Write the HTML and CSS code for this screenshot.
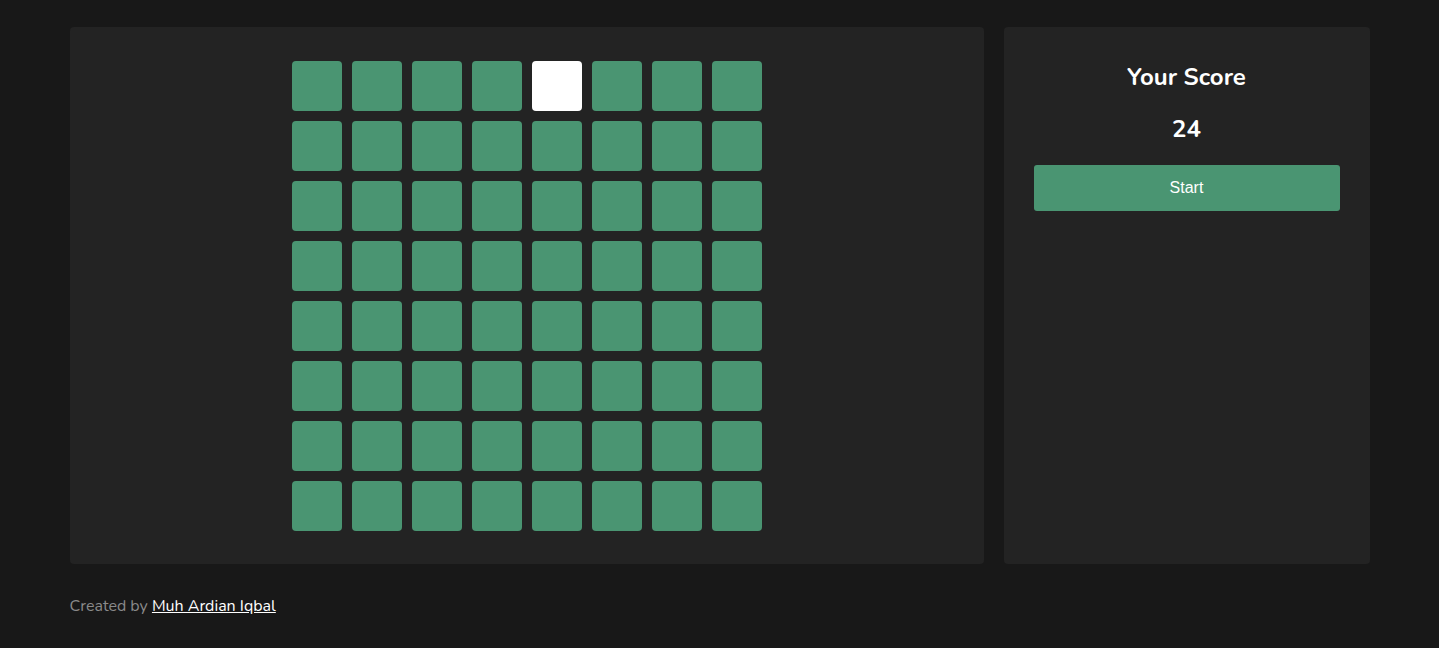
FILE: index.html
```html
<!DOCTYPE html>
<html>
<head>
<meta charset="utf-8">
<link rel="stylesheet" href="styles.css">
</head>
<body>
<div class="container">
  <main class="layout">
    <section class="board-panel">
      <div class="board" id="board"></div>
    </section>
    <aside class="score-panel">
      <h2 class="score-title">Your Score</h2>
      <div class="score-value">24</div>
      <button class="start-btn">Start</button>
    </aside>
  </main>
  <footer class="footer">Created by <a href="#">Muh Ardian Iqbal</a></footer>
</div>
<script>
  var b = document.getElementById('board');
  for (var i = 0; i < 64; i++) {
    var c = document.createElement('div');
    c.className = 'cell' + (i === 4 ? ' active' : '');
    b.appendChild(c);
  }
</script>
</body>
</html>
```
FILE: styles.css
```css
* { box-sizing: border-box; }
html, body { margin: 0; padding: 0; }
body {
  background: #181818;
  color: #fff;
  font-family: "Nunito", "Lato", "Noto Sans", sans-serif;
}
.container {
  width: 1300px;
  margin: 0 auto;
  padding-top: 27px;
}
.layout {
  display: grid;
  grid-template-columns: 914px 366px;
  gap: 20px;
}
.board-panel {
  background: #232323;
  border-radius: 4px;
  height: 537px;
  padding-top: 34px;
  display: flex;
  justify-content: center;
}
.board {
  display: grid;
  grid-template-columns: repeat(8, 50px);
  grid-auto-rows: 50px;
  gap: 10px;
  align-content: start;
}
.cell {
  background: #4a9572;
  border-radius: 4px;
}
.cell.active { background: #fff; }
.score-panel {
  background: #232323;
  border-radius: 4px;
  height: 537px;
  padding: 0 30px;
  text-align: center;
}
.score-title {
  margin: 0;
  padding-top: 35px;
  font-size: 24px;
  font-weight: 700;
  line-height: 30px;
}
.score-value {
  margin-top: 22px;
  font-size: 24px;
  font-weight: 700;
  line-height: 30px;
}
.start-btn {
  display: block;
  width: 100%;
  height: 46px;
  margin-top: 21px;
  border: none;
  border-radius: 3px;
  background: #4a9572;
  color: #fff;
  font-family: "Liberation Sans", Arial, sans-serif;
  font-size: 16px;
}
.footer {
  margin-top: 31px;
  font-size: 16px;
  line-height: 22px;
  color: #8a8a8a;
}
.footer a { color: #fff; }
```
